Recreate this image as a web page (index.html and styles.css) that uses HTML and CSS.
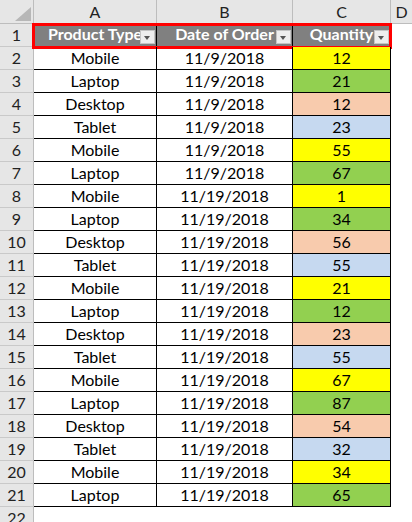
FILE: index.html
```html
<!DOCTYPE html>
<html>
<head>
<meta charset="utf-8">
<link rel="stylesheet" href="styles.css">
</head>
<body>
<div class="sheet">
  <div class="row colhdr">
    <div class="corner"><svg class="tri" width="16" height="14" viewBox="0 0 16 14"><polygon points="16,0 16,14 0,14" fill="#b7b7b7"/></svg></div>
    <div class="ch">A</div><div class="ch">B</div><div class="ch">C</div><div class="ch last">D</div>
  </div>
  <div class="row">
    <div class="rh">1</div>
    <div class="band">
      <div class="c th">Product Type<span class="fb"></span></div>
      <div class="c th">Date of Order<span class="fb"></span></div>
      <div class="c th">Quantity<span class="fb"></span></div>
    </div>
    <div class="d"></div>
  </div>
  <div class="row"><div class="rh">2</div><div class="c">Mobile</div><div class="c">11/9/2018</div><div class="c y">12</div><div class="d"></div></div>
  <div class="row"><div class="rh">3</div><div class="c">Laptop</div><div class="c">11/9/2018</div><div class="c g">21</div><div class="d"></div></div>
  <div class="row"><div class="rh">4</div><div class="c">Desktop</div><div class="c">11/9/2018</div><div class="c o">12</div><div class="d"></div></div>
  <div class="row"><div class="rh">5</div><div class="c">Tablet</div><div class="c">11/9/2018</div><div class="c b">23</div><div class="d"></div></div>
  <div class="row"><div class="rh">6</div><div class="c">Mobile</div><div class="c">11/9/2018</div><div class="c y">55</div><div class="d"></div></div>
  <div class="row"><div class="rh">7</div><div class="c">Laptop</div><div class="c">11/9/2018</div><div class="c g">67</div><div class="d"></div></div>
  <div class="row"><div class="rh">8</div><div class="c">Mobile</div><div class="c">11/19/2018</div><div class="c y">1</div><div class="d"></div></div>
  <div class="row"><div class="rh">9</div><div class="c">Laptop</div><div class="c">11/19/2018</div><div class="c g">34</div><div class="d"></div></div>
  <div class="row"><div class="rh">10</div><div class="c">Desktop</div><div class="c">11/19/2018</div><div class="c o">56</div><div class="d"></div></div>
  <div class="row"><div class="rh">11</div><div class="c">Tablet</div><div class="c">11/19/2018</div><div class="c b">55</div><div class="d"></div></div>
  <div class="row"><div class="rh">12</div><div class="c">Mobile</div><div class="c">11/19/2018</div><div class="c y">21</div><div class="d"></div></div>
  <div class="row"><div class="rh">13</div><div class="c">Laptop</div><div class="c">11/19/2018</div><div class="c g">12</div><div class="d"></div></div>
  <div class="row"><div class="rh">14</div><div class="c">Desktop</div><div class="c">11/19/2018</div><div class="c o">23</div><div class="d"></div></div>
  <div class="row"><div class="rh">15</div><div class="c">Tablet</div><div class="c">11/19/2018</div><div class="c b">55</div><div class="d"></div></div>
  <div class="row"><div class="rh">16</div><div class="c">Mobile</div><div class="c">11/19/2018</div><div class="c y">67</div><div class="d"></div></div>
  <div class="row"><div class="rh">17</div><div class="c">Laptop</div><div class="c">11/19/2018</div><div class="c g">87</div><div class="d"></div></div>
  <div class="row"><div class="rh">18</div><div class="c">Desktop</div><div class="c">11/19/2018</div><div class="c o">54</div><div class="d"></div></div>
  <div class="row"><div class="rh">19</div><div class="c">Tablet</div><div class="c">11/19/2018</div><div class="c b">32</div><div class="d"></div></div>
  <div class="row"><div class="rh">20</div><div class="c">Mobile</div><div class="c">11/19/2018</div><div class="c y">34</div><div class="d"></div></div>
  <div class="row"><div class="rh">21</div><div class="c">Laptop</div><div class="c">11/19/2018</div><div class="c g">65</div><div class="d"></div></div>
  <div class="row"><div class="rh">22</div><div class="e"></div><div class="e"></div><div class="e"></div><div class="d"></div></div>
</div>
</body>
</html>
```
FILE: styles.css
```css
* { box-sizing: border-box; }
html, body { margin: 0; padding: 0; background: #fff; }
body { overflow: hidden; font-family: Lato, "Liberation Sans", sans-serif; font-size: 16px; color: #000; }
.sheet { width: 412px; }
.row { display: grid; grid-template-columns: 34px 123px 136px 98px 1fr; height: 23px; }
.colhdr { height: 24px; }
.corner { background: #e6e6e6; border-right: 1px solid #bdbdbd; border-bottom: 1px solid #bdbdbd; display: flex; align-items: flex-end; justify-content: flex-end; padding: 0 2px 2px 0; }
.tri { display: block; }
.ch { background: #e6e6e6; border-right: 1px solid #bdbdbd; border-bottom: 1px solid #bdbdbd; text-align: center; line-height: 23px; color: #222; }
.ch.last { border-right: none; }
.rh { background: #e6e6e6; border-right: 1px solid #bdbdbd; border-bottom: 1px solid #c9c9c9; text-align: center; line-height: 22px; color: #222; }
.c { border-right: 1px solid #000; border-bottom: 1px solid #000; text-align: center; line-height: 22px; white-space: nowrap; position: relative; }
.e { }
.d { }
.band { grid-column: 2 / 5; display: grid; grid-template-columns: 123px 136px 98px; position: relative; }
.band::after { content: ""; position: absolute; top: -1px; left: -2px; right: -1px; bottom: -2px; border: 3px solid #ff0000; pointer-events: none; }
.th { background: #808080; color: #fff; font-weight: bold; line-height: 20px; }
.fb { position: absolute; right: 1px; bottom: 2px; width: 15px; height: 14px; background: #eeeeee; border: 1px solid #c4c4c4; }
.fb::after { content: ""; position: absolute; left: 3px; top: 5px; border-left: 3.5px solid transparent; border-right: 3.5px solid transparent; border-top: 4px solid #555; }
.y { background: #ffff00; }
.g { background: #92d050; }
.o { background: #f8cbad; }
.b { background: #c6d9f0; }
```
